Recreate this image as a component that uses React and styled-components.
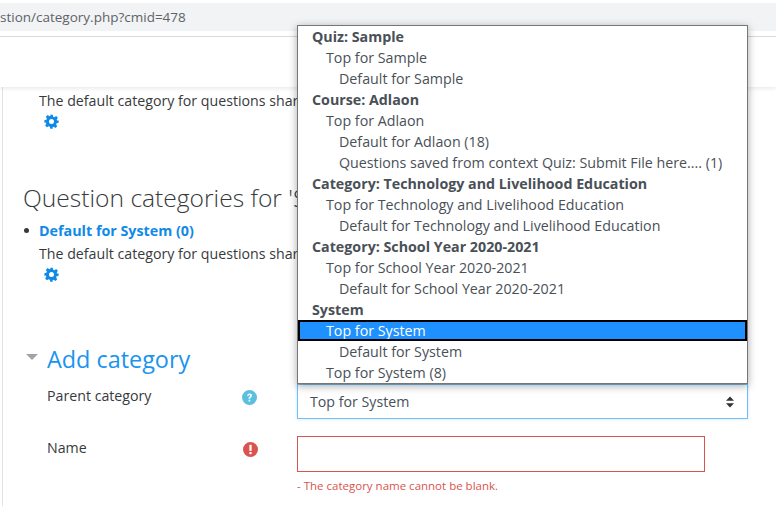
import React from "react";
import styled, { createGlobalStyle } from "styled-components";

const Global = createGlobalStyle`
	html, body {
		margin: 0;
		padding: 0;
		background: #fff;
		overflow: hidden;
	}
	body {
		font-family: "Open Sans", "Noto Sans", sans-serif;
		color: #373a3c;
	}
`;

const Screen = styled.div`
	position: relative;
	width: 776px;
	height: 506px;
	overflow: hidden;
	background: #fff;
`;

const Chrome = styled.div`
	padding-top: 3px;
	height: 33px;
	box-sizing: content-box;
	border-bottom: 1px solid #dadce0;
`;

const UrlBar = styled.div`
	height: 28px;
	background: #f1f3f4;
	font-size: 13.5px;
	line-height: 28px;
	color: #5f6368;
	white-space: nowrap;
`;

const NavBar = styled.div`
	height: 50px;
	background: #fff;
	box-shadow: 0 2px 4px rgba(0, 0, 0, 0.08);
	position: relative;
`;

const Page = styled.div`
	margin-left: 2px;
	border-left: 1px solid #dee2e6;
	height: 420px;
	padding: 3px 0 0 36px;
	box-sizing: border-box;
	white-space: nowrap;
`;

const Description = styled.div`
	font-size: 14.2px;
	line-height: 21px;
	height: 21px;
	color: #373a3c;
`;

const GearRow = styled.div`
	height: 21px;
	padding-left: 5px;
	display: flex;
	align-items: center;
`;

const Heading = styled.h3`
	margin: 47px 0 0 -16px;
	height: 38px;
	font-size: 24.6px;
	line-height: 38px;
	font-weight: 300;
	color: #373a3c;
`;

const CategoryList = styled.ul`
	margin: 2px 0 0 0;
	padding: 0;
	list-style: none;
`;

const CategoryItem = styled.li`
	position: relative;
	&::before {
		content: "";
		position: absolute;
		left: -15px;
		top: 9px;
		width: 5px;
		height: 5px;
		border-radius: 50%;
		background: #373a3c;
	}
`;

const CategoryLink = styled.a`
	display: block;
	height: 24px;
	font-size: 14.3px;
	line-height: 23px;
	font-weight: 700;
	color: #0f8ae8;
`;

const SectionTitle = styled.div`
	display: flex;
	align-items: center;
	margin: 56px 0 0 -14px;
	height: 36px;
`;

const Caret = styled.span`
	width: 0;
	height: 0;
	margin: -4px 9px 0 1px;
	border-left: 6px solid transparent;
	border-right: 6px solid transparent;
	border-top: 6px solid #a3a3a3;
`;

const SectionName = styled.h3`
	margin: 0;
	font-size: 23.4px;
	font-weight: 400;
	color: #1a94ee;
`;

const FormRow = styled.div`
	display: grid;
	grid-template-columns: 195px 55px 1fr;
	margin: ${props => props.$top || 0}px 0 0 8px;
	height: ${props => props.$height}px;
`;

const FieldLabel = styled.label`
	font-size: 14.2px;
	line-height: 21px;
	color: #373a3c;
`;

const FieldIcon = styled.div`
	padding: 3px 0 0 ${props => props.$left || 0}px;
`;

const FieldBody = styled.div`
	margin-top: ${props => props.$top || 0}px;
`;

const Select = styled.div`
	width: 451px;
	height: 35px;
	box-sizing: border-box;
	border: 1px solid #74c0f6;
	box-shadow: 0 0 3px rgba(26, 148, 238, 0.25);
	padding: 0 13px 0 12px;
	display: flex;
	align-items: center;
	justify-content: space-between;
	font-size: 14.2px;
	color: #495057;
`;

const TextInput = styled.div`
	width: 408px;
	height: 36px;
	box-sizing: border-box;
	border: 1px solid #d9534f;
`;

const ErrorText = styled.div`
	margin-top: 6px;
	font-size: 11.5px;
	line-height: 16px;
	color: #d9534f;
`;

const Dropdown = styled.div`
	position: absolute;
	left: 297px;
	top: 25px;
	width: 451px;
	height: 359px;
	box-sizing: border-box;
	border: 1px solid #767676;
	background: #fff;
	box-shadow: 0 2px 8px rgba(0, 0, 0, 0.35);
	font-size: 14.25px;
	white-space: nowrap;
	color: #495057;
`;

const Option = styled.div`
	height: 21px;
	line-height: 21px;
	box-sizing: border-box;
	padding-left: ${props => props.$indent}px;
	font-weight: ${props => (props.$group ? 700 : 400)};
	${props => props.$selected && `
		background: #1e90ff;
		color: #fff;
		outline: 2px solid #000;
		outline-offset: -2px;
	`}
`;

const Gear = () => (
	<svg width="15" height="15" viewBox="0 0 24 24" fill="#0f8ae8" fillRule="evenodd">
		<path d="M10 1h4l.7 3.2 1.9.8 2.8-1.8 2.8 2.8-1.8 2.8.8 1.9L23.4 10v4l-3.2.7-.8 1.9 1.8 2.8-2.8 2.8-2.8-1.8-1.9.8L14 23.4h-4l-.7-3.2-1.9-.8-2.8 1.8-2.8-2.8 1.8-2.8-.8-1.9L.6 14v-4l3.2-.7.8-1.9L3 4.5l2.8-2.8 2.8 1.8 1.9-.8zM12 8a4 4 0 1 0 0 8 4 4 0 0 0 0-8z" />
	</svg>
);

const HelpIcon = () => (
	<svg width="15" height="15" viewBox="0 0 16 16">
		<circle cx="8" cy="8" r="8" fill="#5bc0de" />
		<path d="M5.4 6.2c0-1.6 1.2-2.6 2.7-2.6s2.6.9 2.6 2.2c0 1.9-2 1.9-2 3.4H7c0-2.3 1.8-2.2 1.8-3.3 0-.5-.3-.8-.8-.8s-.9.4-.9 1.1z M7 10.4h1.8v1.9H7z" fill="#fff" />
	</svg>
);

const AlertIcon = () => (
	<svg width="15" height="15" viewBox="0 0 16 16">
		<circle cx="8" cy="8" r="8" fill="#d9534f" />
		<rect x="6.8" y="3" width="2.4" height="6.6" rx="0.5" fill="#fff" />
		<rect x="6.8" y="10.6" width="2.4" height="2.4" rx="0.5" fill="#fff" />
	</svg>
);

const SortArrows = () => (
	<svg width="8" height="12" viewBox="0 0 8 12" fill="#333">
		<path d="M4 0.5 8 4.8H0z M4 11.5 0 7.2h8z" />
	</svg>
);

const options = [
	{ label: "Quiz: Sample", indent: 14, group: true },
	{ label: "Top for Sample", indent: 28 },
	{ label: "Default for Sample", indent: 41 },
	{ label: "Course: Adlaon", indent: 14, group: true },
	{ label: "Top for Adlaon", indent: 28 },
	{ label: "Default for Adlaon (18)", indent: 41 },
	{ label: "Questions saved from context Quiz: Submit File here.... (1)", indent: 41 },
	{ label: "Category: Technology and Livelihood Education", indent: 14, group: true },
	{ label: "Top for Technology and Livelihood Education", indent: 28 },
	{ label: "Default for Technology and Livelihood Education", indent: 41 },
	{ label: "Category: School Year 2020-2021", indent: 14, group: true },
	{ label: "Top for School Year 2020-2021", indent: 28 },
	{ label: "Default for School Year 2020-2021", indent: 41 },
	{ label: "System", indent: 14, group: true },
	{ label: "Top for System", indent: 28, selected: true },
	{ label: "Default for System", indent: 41 },
	{ label: "Top for System (8)", indent: 28 },
];

export default function App() {
	return (
		<Screen>
			<Global />
			<Chrome>
				<UrlBar>stion/category.php?cmid=478</UrlBar>
			</Chrome>
			<NavBar />
			<Page>
				<Description>The default category for questions shar</Description>
				<GearRow><Gear /></GearRow>
				<Heading>Question categories for 'S</Heading>
				<CategoryList>
					<CategoryItem>
						<CategoryLink>Default for System (0)</CategoryLink>
						<Description>The default category for questions shar</Description>
						<GearRow><Gear /></GearRow>
					</CategoryItem>
				</CategoryList>
				<SectionTitle>
					<Caret />
					<SectionName>Add category</SectionName>
				</SectionTitle>
				<FormRow $height={52} $top={8}>
					<FieldLabel>Parent category</FieldLabel>
					<FieldIcon><HelpIcon /></FieldIcon>
					<FieldBody $top={-1}>
						<Select>
							Top for System
							<SortArrows />
						</Select>
					</FieldBody>
				</FormRow>
				<FormRow $height={60}>
					<FieldLabel>Name</FieldLabel>
					<FieldIcon $left={1}><AlertIcon /></FieldIcon>
					<FieldBody $top={-1}>
						<TextInput />
						<ErrorText>- The category name cannot be blank.</ErrorText>
					</FieldBody>
				</FormRow>
			</Page>
			<Dropdown>
				{options.map(o => (
					<Option key={o.label} $indent={o.indent} $group={o.group} $selected={o.selected}>
						{o.label}
					</Option>
				))}
			</Dropdown>
		</Screen>
	);
}
